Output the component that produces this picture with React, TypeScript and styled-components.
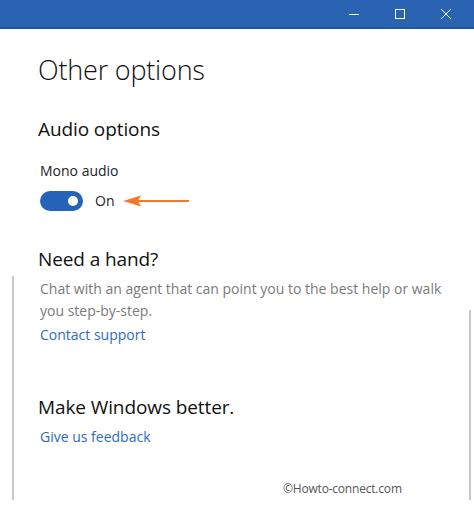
import React from "react";
import styled, { createGlobalStyle } from "styled-components";

const Global = createGlobalStyle`
  html, body { margin: 0; padding: 0; background: #fff; }
  body { font-family: "Open Sans", "Noto Sans", sans-serif; }
  #root { width: 474px; height: 513px; overflow: hidden; }
`;

const Window = styled.div`
  width: 474px;
  height: 513px;
  display: flex;
  flex-direction: column;
  background: #fff;
  position: relative;
`;

const TitleBar = styled.div`
  height: 27px;
  background: #2b63b3;
  border-bottom: 2px solid #1f56a4;
  display: flex;
  justify-content: flex-end;
  align-items: center;
  padding-right: 5px;
`;

const CtrlButton = styled.div`
  width: 46px;
  height: 27px;
  display: flex;
  align-items: center;
  justify-content: center;
`;

const Content = styled.div`
  flex: 1;
  padding: 0 0 0 38px;
  display: flex;
  flex-direction: column;
  position: relative;
`;

const PageTitle = styled.h1`
  margin: 22px 0 0 0;
  font-weight: 300;
  font-size: 27px;
  line-height: 38px;
  color: #111;
  letter-spacing: -0.2px;
`;

const SectionTitle = styled.h2<{ $top: number }>`
  margin: ${(p) => p.$top}px 0 0 0;
  font-weight: 400;
  font-size: 19px;
  line-height: 26px;
  color: #111;
  letter-spacing: -0.1px;
`;

const Label = styled.div`
  margin: 19px 0 0 2px;
  font-size: 14px;
  line-height: 20px;
  color: #222;
`;

const ToggleRow = styled.div`
  margin: 10px 0 0 2px;
  display: flex;
  align-items: center;
  gap: 12px;
`;

const Track = styled.div`
  width: 43px;
  height: 20px;
  border-radius: 10px;
  background: #2563b8;
  display: flex;
  align-items: center;
  justify-content: flex-end;
  padding-right: 5px;
  box-sizing: border-box;
`;

const Knob = styled.div`
  width: 10px;
  height: 10px;
  border-radius: 50%;
  background: #fff;
`;

const ToggleText = styled.span`
  font-size: 14px;
  line-height: 20px;
  color: #222;
`;

const Arrow = styled.svg`
  margin-left: -3px;
`;

const Body = styled.p`
  margin: 6px 0 0 2px;
  width: 410px;
  font-size: 14px;
  line-height: 22px;
  color: #7a7a7a;
`;

const Link = styled.a<{ $top: number }>`
  display: block;
  margin: ${(p) => p.$top}px 0 0 2px;
  font-size: 14px;
  line-height: 20px;
  color: #2e6bbd;
  text-decoration: none;
`;

const Lower = styled.div`
  display: flex;
  flex-direction: column;
  position: relative;
  &::before {
    content: "";
    position: absolute;
    left: -26px;
    top: 65px;
    width: 2px;
    height: 224px;
    background: #c8c8c8;
  }
  &::after {
    content: "";
    position: absolute;
    left: 431px;
    top: 99px;
    width: 2px;
    height: 190px;
    background: #c8c8c8;
  }
`;

const Watermark = styled.div`
  margin: 33px 0 0 245px;
  font-size: 12px;
  line-height: 18px;
  color: #555;
  letter-spacing: -0.2px;
`;

export default function App() {
  return (
    <>
      <Global />
      <Window>
        <TitleBar>
          <CtrlButton>
            <svg width="12" height="12" viewBox="0 0 12 12">
              <path d="M1 6.5h10" stroke="#fff" strokeWidth="1" />
            </svg>
          </CtrlButton>
          <CtrlButton>
            <svg width="12" height="12" viewBox="0 0 12 12">
              <rect x="1.5" y="1.5" width="9" height="9" fill="none" stroke="#fff" strokeWidth="1" />
            </svg>
          </CtrlButton>
          <CtrlButton>
            <svg width="12" height="12" viewBox="0 0 12 12">
              <path d="M1 1L11 11M11 1L1 11" stroke="#fff" strokeWidth="1" />
            </svg>
          </CtrlButton>
        </TitleBar>
        <Content>
          <PageTitle>Other options</PageTitle>
          <SectionTitle $top={27}>Audio options</SectionTitle>
          <Label>Mono audio</Label>
          <ToggleRow>
            <Track>
              <Knob />
            </Track>
            <ToggleText>On</ToggleText>
            <Arrow width="66" height="14" viewBox="0 0 66 14">
              <path d="M14 7H66" stroke="#f47a2a" strokeWidth="2" />
              <path d="M0 7L18 1.5L15 7L18 12.5Z" fill="#f47a2a" />
            </Arrow>
          </ToggleRow>
          <Lower>
            <SectionTitle $top={35}>Need a hand?</SectionTitle>
            <Body>
              Chat with an agent that can point you to the best help or walk you step-by-step.
            </Body>
            <Link $top={3}>Contact support</Link>
            <SectionTitle $top={49}>Make Windows better.</SectionTitle>
            <Link $top={7}>Give us feedback</Link>
            <Watermark>©Howto-connect.com</Watermark>
          </Lower>
        </Content>
      </Window>
    </>
  );
}
